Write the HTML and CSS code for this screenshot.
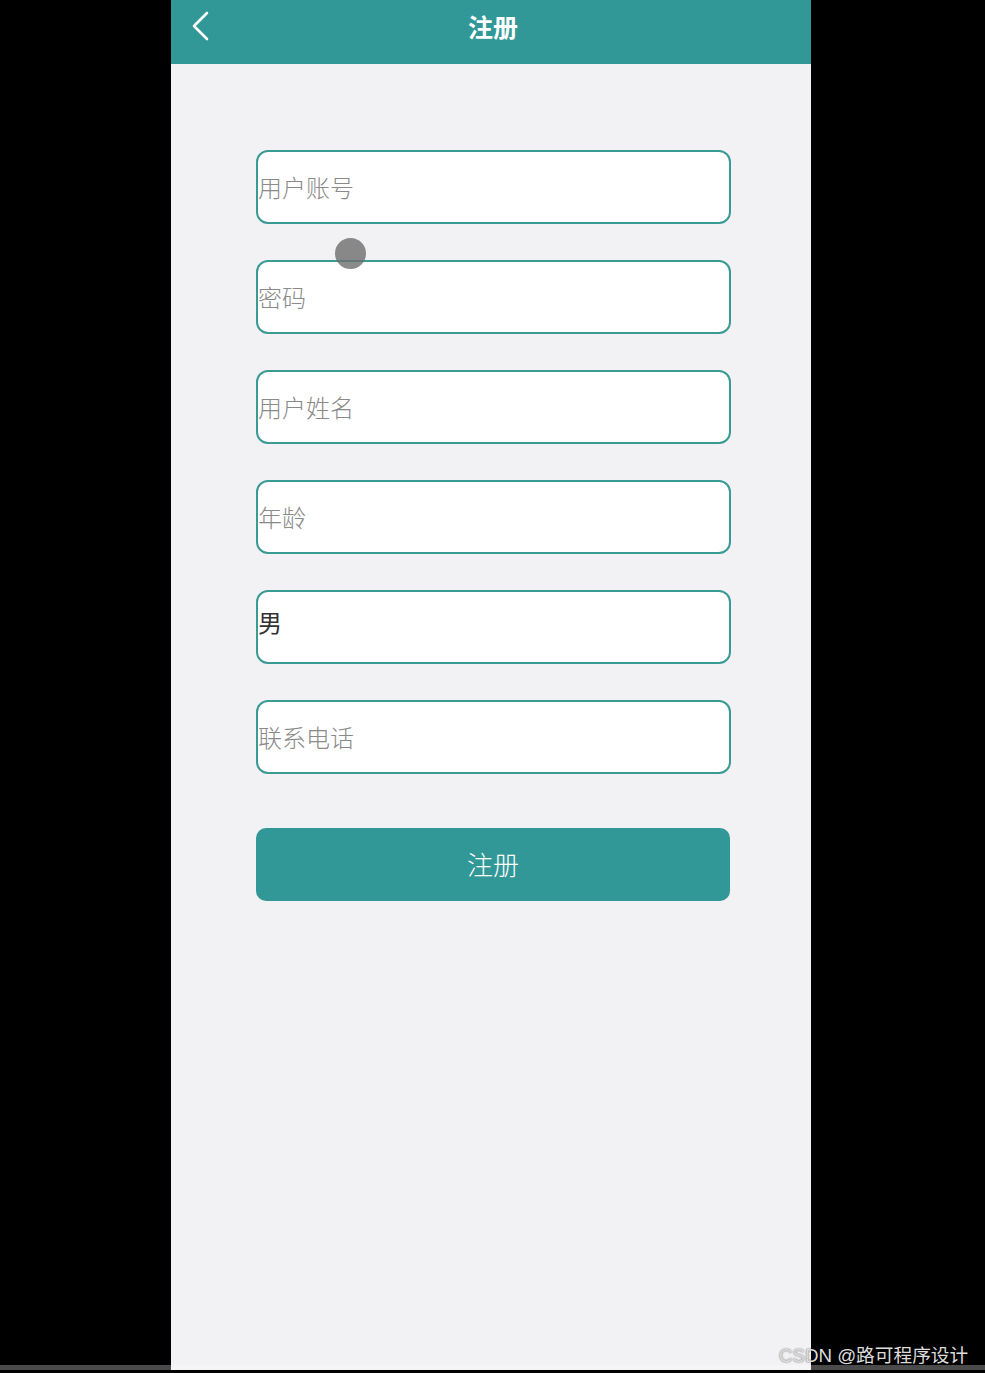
FILE: index.html
```html
<!DOCTYPE html>
<html lang="zh-CN">
<head>
    <meta charset="UTF-8">
    <meta name="viewport" content="width=device-width, initial-scale=1.0">
    <title>注册</title>
    <link rel="stylesheet" href="styles.css">
</head>
<body>
    <div class="stage">
        <div class="phone">
            <div class="header">
                <svg class="back" width="20" height="32" viewBox="0 0 20 32">
                    <polyline points="16,3 3,16 16,29" fill="none" stroke="#fff" stroke-width="2.6" stroke-linecap="round" stroke-linejoin="round"/>
                </svg>
                <div class="title">注册</div>
            </div>
            <form class="form">
                <input class="field" type="text" placeholder="用户账号">
                <input class="field" type="password" placeholder="密码">
                <input class="field" type="text" placeholder="用户姓名">
                <input class="field" type="text" placeholder="年龄">
                <div class="field picker">男</div>
                <input class="field" type="text" placeholder="联系电话">
                <button class="submit" type="button">注册</button>
            </form>
            <div class="touch"></div>
        </div>
    </div>
    <div class="bar">
        <div class="bar-side"></div>
        <div class="bar-phone"></div>
        <div class="bar-side"></div>
    </div>
    <div class="watermark">CSDN @路可程序设计</div>
</body>
</html>
```

FILE: styles.css
```css
body {
    margin: 0;
    height: 1373px;
    background-color: #000;
    font-family: "Noto Sans CJK SC", "Noto Sans", sans-serif;
    overflow: hidden;
    position: relative;
}

.stage {
    display: flex;
    padding-left: 171px;
    height: 1365px;
}

.phone {
    position: relative;
    width: 640px;
    background-color: #f2f1f4;
}

.header {
    height: 64px;
    background-color: #329897;
    display: flex;
    align-items: center;
    position: relative;
}

.back {
    position: absolute;
    left: 20px;
    top: 10px;
}

.title {
    flex: 1;
    text-align: center;
    color: #fff;
    font-size: 25px;
    font-weight: bold;
    padding: 0 0 12px 4px;
}

.form {
    display: flex;
    flex-direction: column;
    gap: 36px;
    padding: 86px 0 0 85px;
}

.field {
    box-sizing: border-box;
    width: 475px;
    height: 74px;
    border: 2.5px solid #3a9a94;
    border-radius: 12px;
    background-color: #fff;
    padding: 0 0 2px 0;
    font-family: inherit;
    font-size: 24px;
    color: #333;
    outline: none;
}

.field::placeholder {
    color: #8a8a8a;
    font-weight: 300;
}

.picker {
    display: flex;
    align-items: flex-start;
    padding-top: 12px;
    font-size: 24px;
    color: #333;
}

.submit {
    margin-top: 18px;
    width: 474px;
    height: 73px;
    border: none;
    border-radius: 10px;
    background-color: #329897;
    color: #fff;
    font-family: inherit;
    font-size: 26px;
    font-weight: 300;
    padding-bottom: 4px;
    cursor: pointer;
}

.touch {
    position: absolute;
    left: 164px;
    top: 238px;
    width: 31px;
    height: 31px;
    border-radius: 50%;
    background-color: rgba(110, 110, 110, 0.8);
}

.bar {
    display: flex;
    height: 5px;
}

.bar-side {
    flex: 1;
    background-color: #4a4a4a;
}

.bar-side:first-child {
    flex: 0 0 171px;
}

.bar-phone {
    width: 640px;
    background-color: #f5f4f7;
}

.watermark {
    position: absolute;
    left: 779px;
    top: 1340px;
    font-family: "Liberation Sans", "Noto Sans CJK SC", sans-serif;
    font-size: 18.7px;
    color: #dcdcdc;
    text-shadow: 0 0 2px rgba(0, 0, 0, 0.6);
}
```
